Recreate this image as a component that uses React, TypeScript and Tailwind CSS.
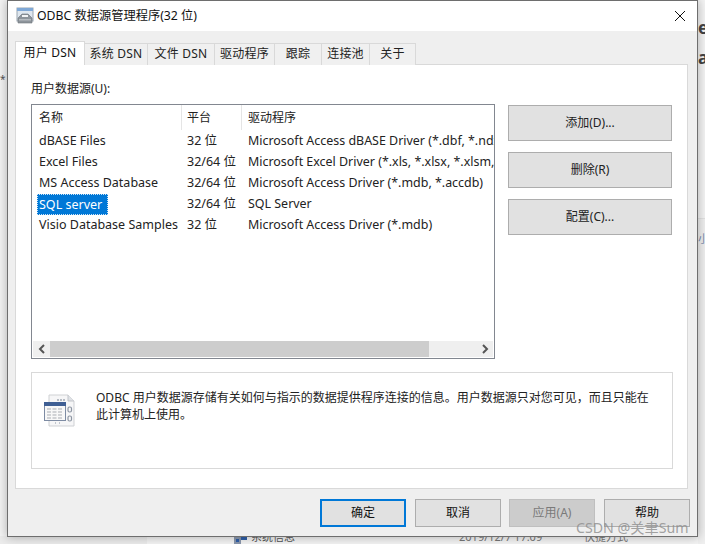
import React from "react";

const font = { fontFamily: '"Noto Sans", "Noto Sans CJK SC", sans-serif' };

const tabs = [
  { label: "系统 DSN", w: "w-[63px]" },
  { label: "文件 DSN", w: "w-[67px]" },
  { label: "驱动程序", w: "w-[60px]" },
  { label: "跟踪", w: "w-[47px]" },
  { label: "连接池", w: "w-[48px]" },
  { label: "关于", w: "w-[46px]" },
];

const rows = [
  ["dBASE Files", "32 位", "Microsoft Access dBASE Driver (*.dbf, *.ndx, *.mdx)"],
  ["Excel Files", "32/64 位", "Microsoft Excel Driver (*.xls, *.xlsx, *.xlsm, *.xlsb)"],
  ["MS Access Database", "32/64 位", "Microsoft Access Driver (*.mdb, *.accdb)"],
  ["SQL server", "32/64 位", "SQL Server"],
  ["Visio Database Samples", "32 位", "Microsoft Access Driver (*.mdb)"],
];

function SideButton({ children }: { children: React.ReactNode }) {
  return (
    <div className="w-[164px] h-[36px] flex items-center justify-center bg-[#e1e1e1] border border-[#adadad] text-[12px] text-[#222]">
      {children}
    </div>
  );
}

function FootButton({ children, cls }: { children: React.ReactNode; cls: string }) {
  return <div className={`w-[86px] h-[28px] flex items-center justify-center text-[12px] pb-[1px] ${cls}`}>{children}</div>;
}

export default function App() {
  return (
    <div className="relative w-[705px] h-[544px] overflow-hidden bg-[#f4f4f4]" style={font}>
      {/* Background page peeking around the dialog */}
      <div className="absolute left-0 top-[72px] text-[10px] text-[#555]">*</div>
      <div className="absolute left-[698px] top-[16px] w-[7px] overflow-hidden text-[17px] font-bold text-[#444] leading-[24px]">e</div>
      <div className="absolute left-[698px] top-[46px] w-[7px] overflow-hidden text-[17px] font-bold text-[#444] leading-[24px]">a</div>
      <div className="absolute left-[698px] top-[218px] w-[7px] h-[326px] bg-[#efefef] border-t border-[#e2e2e2] overflow-hidden">
        <div className="text-[11px] leading-[16px] mt-[12px] text-[#7d8fb0]">小</div>
      </div>
      <div className="absolute left-0 top-[536px] w-[147px] h-[8px] bg-[#ececec]" />
      <svg width="16" height="10" viewBox="0 0 16 10" className="absolute left-[233px] top-[534px]">
        <rect x="1" y="3" width="7" height="7" fill="#8a97ad" />
        <rect x="8" y="0" width="6" height="6" fill="#2f5fa8" />
        <rect x="3" y="5" width="3" height="3" fill="#2f5fa8" />
      </svg>
      <div className="absolute left-[251px] top-[529px] text-[11px] text-[#555]">系统信息</div>
      <div className="absolute left-[459px] top-[529px] text-[11px] text-[#777]">2019/12/7 17:09</div>
      <div className="absolute left-[584px] top-[529px] text-[11px] text-[#777]">快捷方式</div>

      {/* Dialog window */}
      <div className="absolute left-[7px] top-0 w-[691px] h-[537px] flex flex-col bg-[#efefef] border border-[#6e6e6e] shadow-[0_0_10px_rgba(0,0,0,0.3)]">
        <div className="h-[30px] shrink-0 bg-white flex items-center pl-[8px]">
          <svg width="18" height="18" viewBox="0 0 18 18" className="shrink-0">
            <rect x="1" y="1" width="16" height="13" fill="#dfe7ef" stroke="#9aa5b0" />
            <rect x="1" y="1" width="16" height="3" fill="#7fa8d6" />
            <path d="M2 11 L6 7 H12 L16 11 V16 H2 Z" fill="#8d949b" stroke="#6f767d" strokeWidth="0.6" />
            <rect x="6" y="8" width="6" height="2" fill="#f2f3f4" />
            <rect x="3" y="12" width="12" height="1.5" fill="#b5babf" />
          </svg>
          <span className="ml-[3px] text-[12.25px] text-[#111]">ODBC 数据源管理程序(32 位)</span>
          <svg width="12" height="12" viewBox="0 0 12 12" className="ml-auto mr-[11px]">
            <path d="M1 1 L11 11 M11 1 L1 11" stroke="#111" strokeWidth="1" fill="none" />
          </svg>
        </div>

        <div className="pl-[7px] pr-[9px] pt-[10px] flex flex-col">
          <div className="flex items-end h-[24px] relative z-10">
            <div className="w-[70px] h-[24px] pb-[1px] bg-white border border-[#d9d9d9] border-b-0 flex items-center justify-center text-[12px] text-[#111] tracking-[0.2px]">
              用户 DSN
            </div>
            {tabs.map((t) => (
              <div
                key={t.label}
                className={`${t.w} h-[22px] pb-[1px] border-t border-r border-[#d9d9d9] bg-[#f0f0f0] flex items-center justify-center text-[12px] text-[#222] tracking-[0.2px]`}
              >
                {t.label}
              </div>
            ))}
          </div>

          <div className="h-[425px] bg-white border border-[#d9d9d9] -mt-px pl-[15px] pr-[14px] pt-[15px] flex flex-col">
            <div className="text-[12px] text-[#222] leading-[18px] h-[24px]">用户数据源(U):</div>
            <div className="flex items-start">
              <div className="w-[464px] h-[255px] border border-[#828790] flex flex-col shrink-0">
                <div className="flex h-[25px] text-[12px] text-[#222] items-center shrink-0">
                  <div className="w-[150px] pl-[7px] border-r border-[#e5e5e5] h-full flex items-center">名称</div>
                  <div className="w-[60px] pl-[5px] border-r border-[#e5e5e5] h-full flex items-center">平台</div>
                  <div className="pl-[6px]">驱动程序</div>
                </div>
                <div className="flex-1 overflow-hidden pt-[1px]">
                  {rows.map((r, i) => (
                    <div key={r[0]} className="flex h-[21px] items-center text-[12.5px] text-[#222] whitespace-nowrap">
                      <div className="w-[155px] shrink-0 pl-[5px]">
                        <span
                          className={
                            i === 3
                              ? "inline-block w-[71px] pl-[1px] h-[21px] leading-[19px] bg-[#0078d7] text-white border border-dotted border-[#cfe5f7]"
                              : "pl-[2px]"
                          }
                        >
                          {r[0]}
                        </span>
                      </div>
                      <div className="w-[61px] shrink-0">{r[1]}</div>
                      <div className="flex-1 overflow-hidden text-[12.45px]">{r[2]}</div>
                    </div>
                  ))}
                </div>
                <div className="h-[16px] mx-[1px] mb-[1px] bg-[#efefef] flex items-center shrink-0">
                  <div className="w-[17px] flex justify-center">
                    <svg width="8" height="10" viewBox="0 0 8 10">
                      <path d="M6 1 L2 5 L6 9" stroke="#555" strokeWidth="2" fill="none" />
                    </svg>
                  </div>
                  <div className="w-[379px] h-full bg-[#cdcdcd]" />
                  <div className="ml-auto w-[17px] flex justify-center">
                    <svg width="8" height="10" viewBox="0 0 8 10">
                      <path d="M2 1 L6 5 L2 9" stroke="#555" strokeWidth="2" fill="none" />
                    </svg>
                  </div>
                </div>
              </div>
              <div className="ml-[13px] flex flex-col gap-[11px] pt-px">
                <SideButton>添加(D)...</SideButton>
                <SideButton>删除(R)</SideButton>
                <SideButton>配置(C)...</SideButton>
              </div>
            </div>
            <div className="mt-[13px] h-[97px] w-[642px] border border-[#d9d9d9] flex items-start">
              <svg width="34" height="34" viewBox="0 0 34 34" className="ml-[11px] mt-[21px] shrink-0">
                <path d="M6 1 H25 L31 7 V32 H6 Z" fill="#f6f6f7" stroke="#cfd1d4" />
                <path d="M25 1 V7 H31" fill="#dfe2e6" stroke="#c2c5ca" />
                <path d="M15 5 V7 M18 5 V7 M21 5 V7" stroke="#8d96a3" strokeWidth="1.2" />
                <rect x="1.5" y="8.5" width="21" height="18" fill="#f8f8f8" stroke="#7d8ba3" />
                <rect x="1" y="8" width="22" height="4" fill="#3f5f94" />
                <path d="M4 15 H20 M4 18 H20 M4 21 H20 M4 24 H20" stroke="#a9adb3" strokeDasharray="4 1.5" />
                <rect x="25" y="13" width="3.5" height="5" rx="1.5" fill="none" stroke="#8d96a3" strokeWidth="1.2" />
                <rect x="25" y="22" width="3.5" height="5" rx="1.5" fill="none" stroke="#8d96a3" strokeWidth="1.2" />
                <path d="M12 29 H13 M16 29 H17" stroke="#8d96a3" strokeWidth="1.2" />
              </svg>
              <div className="ml-[19px] mt-[16px] w-[562px] text-[12px] leading-[17px] text-[#222]">
                ODBC 用户数据源存储有关如何与指示的数据提供程序连接的信息。用户数据源只对您可见，而且只能在此计算机上使用。
              </div>
            </div>
          </div>

          <div className="mt-[10px] flex justify-end -mr-[2px]">
            <FootButton cls="bg-[#e1e1e1] border-2 border-[#0078d7] text-[#111]">确定</FootButton>
            <FootButton cls="ml-[9px] bg-[#e1e1e1] border border-[#adadad] text-[#111]">取消</FootButton>
            <FootButton cls="ml-[8px] bg-[#cccccc] border border-[#bfbfbf] text-[#7a7a7a]">应用(A)</FootButton>
            <FootButton cls="ml-[9px] bg-[#e1e1e1] border border-[#adadad] text-[#111]">帮助</FootButton>
          </div>
        </div>
      </div>

      {/* Watermark */}
      <div className="absolute left-[576px] top-[518px] text-[14.2px] leading-[20px] text-[#8c8c8c]/80 whitespace-nowrap">
        CSDN @关聿Sum
      </div>
    </div>
  );
}
